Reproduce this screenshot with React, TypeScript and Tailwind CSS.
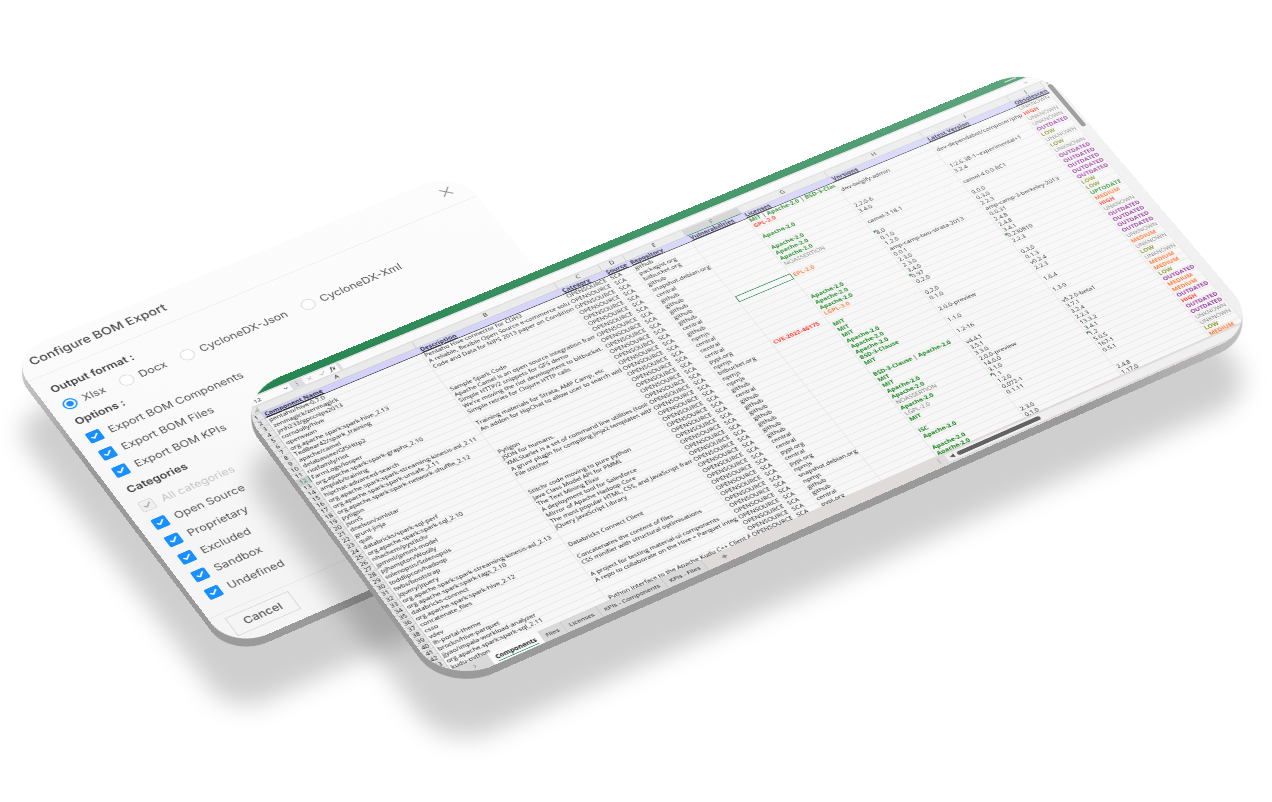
import { useState } from 'react';
import type { ReactNode } from 'react';
import { clsx } from 'clsx';
import { Check, ChevronDown, ChevronRight, Plus, X } from 'lucide-react';

type Point = [number, number];

interface Plane {
  x: number;
  y: number;
  w: number;
  h: number;
  // top left, top right, bottom right, bottom left
  corners: [Point, Point, Point, Point];
}

// Perspective matrix that carries a flat rectangle onto four corner points.
function project({ x, y, w, h, corners }: Plane) {
  const [[x0, y0], [x1, y1], [x2, y2], [x3, y3]] = corners;
  const dx1 = x1 - x2;
  const dy1 = y1 - y2;
  const dx2 = x3 - x2;
  const dy2 = y3 - y2;
  const sx = x0 - x1 + x2 - x3;
  const sy = y0 - y1 + y2 - y3;
  const det = dx1 * dy2 - dy1 * dx2;
  const g = (sx * dy2 - sy * dx2) / det;
  const k = (dx1 * sy - dy1 * sx) / det;

  const colU = [x1 - x0 + g * x1, y1 - y0 + g * y1, g].map((n) => n / w);
  const colV = [x3 - x0 + k * x3, y3 - y0 + k * y3, k].map((n) => n / h);
  const colO = [x0, y0, 1].map((n, i) => n - x * colU[i] - y * colV[i]);
  const s = colO[2];
  const [u, v, o] = [colU, colV, colO].map((col) => col.map((n) => n / s));

  return `matrix3d(${[u[0], u[1], 0, u[2], v[0], v[1], 0, v[2], 0, 0, 1, 0, o[0], o[1], 0, 1].join(',')})`;
}

const DIALOG_PLANE = project({
  x: 0,
  y: 50,
  w: 616,
  h: 438,
  corners: [[28, 382], [477, 196], [661, 423], [208, 619]],
});

const SHEET_PLANE = project({
  x: 18,
  y: 45,
  w: 1000,
  h: 420,
  corners: [[266, 416], [1016, 105], [1206, 330], [448, 663]],
});

const EDGE_LAYERS = [8, 6, 4, 2];

function Slab({
  plane,
  size,
  edge,
  label,
  children,
}: {
  plane: string;
  size: string;
  edge: string;
  label: string;
  children: ReactNode;
}) {
  return (
    <section aria-label={label}>
      <div className="pointer-events-none absolute inset-0 blur-[12px]">
        <div
          className={clsx('absolute top-0 left-0 origin-top-left bg-black/19', size)}
          style={{ transform: `translateY(66px) ${plane}` }}
        />
      </div>
      {EDGE_LAYERS.map((depth) => (
        <div
          key={depth}
          className={clsx('absolute top-0 left-0 origin-top-left', size, edge)}
          style={{ transform: `translateY(${depth}px) ${plane}` }}
        />
      ))}
      <div
        className={clsx(
          'absolute top-0 left-0 flex origin-top-left flex-col overflow-hidden [text-rendering:geometricPrecision]',
          size
        )}
        style={{ transform: plane }}
      >
        {children}
      </div>
    </section>
  );
}

/* ---------- export dialog ---------- */

const FORMATS = ['Xlsx', 'Docx', 'CycloneDX-Json', 'CycloneDX-Xml'];
const OPTIONS = ['Export BOM Components', 'Export BOM Files', 'Export BOM KPIs'];
const CATEGORIES = ['Open Source', 'Proprietary', 'Excluded', 'Sandbox', 'Undefined'];

function CheckRow({ label, disabled }: { label: string; disabled?: boolean }) {
  const [checked, setChecked] = useState(true);
  return (
    <label className={clsx('flex h-8 items-center gap-2.5', disabled ? 'text-[#c4c4c4]' : 'text-[#555555]')}>
      <span className="relative flex size-[18px]">
        <input
          type="checkbox"
          checked={checked}
          disabled={disabled}
          onChange={() => setChecked(!checked)}
          className="size-[18px] appearance-none rounded-[2px] border border-[#d4d4d4] bg-[#f0f0f0] enabled:checked:border-[#1890ff] enabled:checked:bg-[#1890ff]"
        />
        {checked && (
          <Check
            className={clsx('pointer-events-none absolute inset-[3px] size-3', disabled ? 'text-[#b0b0b0]' : 'text-white')}
            strokeWidth={4}
          />
        )}
      </span>
      {label}
    </label>
  );
}

function ExportDialog() {
  const [format, setFormat] = useState('Xlsx');
  return (
    <Slab
      plane={DIALOG_PLANE}
      size="h-[544px] w-[616px] rounded-[48px]"
      edge="bg-[linear-gradient(217deg,#fcfcfc_30%,#9a9a9a_65%)]"
      label="Configure BOM Export"
    >
      <div className="flex flex-1 flex-col bg-[linear-gradient(217deg,#fcfcfc_0%,#fbfbfb_45%,#f5f5f5_80%)] font-['Inter','Liberation_Sans',sans-serif] text-[15px] text-[#555555]">
        <header className="flex h-[50px] items-center justify-between border-b border-[#ececec] px-[17px]">
          <h2 className="text-[17px] font-medium text-[#4f4f4f]">Configure BOM Export</h2>
          <button aria-label="Close" className="text-[#8c8c8c]">
            <X className="size-6" strokeWidth={1.5} />
          </button>
        </header>
        <div className="flex-1 px-[17px] pt-[11px]">
          <h3 className="h-[30px] leading-[30px] font-semibold text-[#424242]">Output format :</h3>
          <div className="flex h-[30px] items-center gap-5">
            {FORMATS.map((name) => (
              <label key={name} className="flex items-center gap-2">
                <input
                  type="radio"
                  name="format"
                  checked={format === name}
                  onChange={() => setFormat(name)}
                  className="size-[18px] appearance-none rounded-full border border-[#cfcfcf] bg-white checked:border-2 checked:border-[#1890ff] checked:bg-[radial-gradient(circle,#1890ff_4px,#ffffff_5px)]"
                />
                {name}
              </label>
            ))}
          </div>
          <h3 className="h-[30px] leading-[30px] font-semibold text-[#424242]">Options :</h3>
          {OPTIONS.map((name) => (
            <CheckRow key={name} label={name} />
          ))}
          <h3 className="h-8 leading-8 font-semibold text-[#424242]">Categories</h3>
          <CheckRow label="All categories" disabled />
          {CATEGORIES.map((name) => (
            <CheckRow key={name} label={name} />
          ))}
        </div>
        <footer className="flex h-14 items-start border-t border-[#e6e6e6] px-[17px] pt-2">
          <button className="h-8 border border-[#d4d4d4] px-4 font-medium">Cancel</button>
        </footer>
      </div>
    </Slab>
  );
}

/* ---------- spreadsheet ---------- */

interface Row {
  name: string;
  description?: string;
  repo: string;
  license?: string;
  version?: string;
  latest?: string;
  status: string;
}

const COLUMNS = [
  { letter: 'A', title: 'Component Name', width: 'w-[198px]' },
  { letter: 'B', title: 'Description', width: 'w-[185px]' },
  { letter: 'C', title: 'Category', width: 'w-[58px]' },
  { letter: 'D', title: 'Source', width: 'w-[32px]' },
  { letter: 'E', title: 'Repository', width: 'w-[80px]' },
  { letter: 'F', title: 'Vulnerabilities', width: 'w-[74px]' },
  { letter: 'G', title: 'Licenses', width: 'w-[119px]' },
  { letter: 'H', title: 'Versions', width: 'w-[132px]' },
  { letter: 'I', title: 'Latest Version', width: 'w-[122px]' },
  { letter: 'J', title: 'Obsolescence', width: 'w-[48px]' },
];

const ROWS: Row[] = [
  { name: 'pentaho/hive-0.7.0', description: 'Pentaho Hive connector for CDH3', repo: 'github', license: 'MIT | Apache-2.0 | BSD-3-Clause', status: 'UNKNOWN' },
  { name: 'zenmagick/zenmagick', description: 'A reliable, flexible Open Source e-commerce solution', repo: 'packagist.org', license: 'GPL-2.0', version: 'dev-twigify-admin', latest: 'dev-dependabot/composer/phpunit', status: 'HIGH' },
  { name: 'jmh233/gpccnips2013', description: 'Code and Data for NIPS 2013 paper on Conditional', repo: 'bitbucket.org', status: 'UNKNOWN' },
  { name: 'corndolly/hive', repo: 'github', license: 'Apache-2.0', status: 'UNKNOWN' },
  { name: 'openswan', repo: 'snapshot.debian.org', version: '2.2.0-6', latest: '1:2.6.38-1~experimental+1', status: 'OUTDATED' },
  { name: 'org.apache.spark:spark-hive_2.13', repo: 'central', license: 'Apache-2.0', version: '3.4.0', latest: '3.2.4', status: 'LOW' },
  { name: 'TedBear42/spark_training', description: 'Sample Spark Code', repo: 'github', license: 'Apache-2.0', status: 'UNKNOWN' },
  { name: 'apache/camel', description: 'Apache Camel is an open source integration frame', repo: 'github', license: 'Apache-2.0', version: 'camel-3.18.1', latest: 'camel-4.0.0-RC1', status: 'LOW' },
  { name: 'delabassee/GfSHttp2', description: 'Simple HTTP/2 snippets for GFS demo', repo: 'github', license: 'NOASSERTION', status: 'UNKNOWN' },
  { name: 'riotfamily/riot', description: "We're moving the riot development to bitbucket. T", repo: 'github', version: '!8.0', latest: '9.0.0', status: 'OUTDATED' },
  { name: 'FarmLogs/looper', description: 'Simple retries for Clojure HTTP calls', repo: 'github', license: 'EPL-2.0', version: '0.1.0', latest: '0.3.0', status: 'OUTDATED' },
  { name: 'org.apache.spark:spark-graphx_2.10', repo: 'central', version: '1.2.0', latest: '2.2.3', status: 'OUTDATED' },
  { name: 'amplab/training', description: 'Training materials for Strata, AMP Camp, etc', repo: 'github', version: 'amp-camp-two-strata-2013', latest: 'amp-camp-3-berkeley-2013', status: 'OUTDATED' },
  { name: 'hipchat-advanced-search', description: 'An addon for HipChat to allow user to search with', repo: 'npmjs', version: '0.0.1', latest: '0.0.31', status: 'OUTDATED' },
  { name: 'org.apache.spark:spark-streaming-kinesis-asl_2.11', repo: 'central', license: 'Apache-2.0', version: '2.3.0', latest: '2.4.8', status: 'LOW' },
  { name: 'org.apache.spark:spark-unsafe_2.11', repo: 'central', license: 'Apache-2.0', version: '2.3.0', latest: '2.4.8', status: 'LOW' },
  { name: 'org.apache.spark:spark-network-shuffle_2.12', repo: 'central', license: 'Apache-2.0', version: '3.4.0', latest: '3.4.1', status: 'UPTODATE' },
  { name: 'pytigon', description: 'Pytigon', repo: 'pypi.org', license: 'LGPL-3.0', version: '!0.97', latest: '!0.230819', status: 'MEDIUM' },
  { name: 'json5', description: 'JSON for humans.', repo: 'npmjs', version: '0.2.0', latest: '2.2.3', status: 'HIGH' },
  { name: 'dnelson/xmlstar', description: 'XMLStarlet is a set of command line utilities (tools', repo: 'bitbucket.org', license: 'MIT', status: 'UNKNOWN' },
  { name: 'grunt-jinja', description: 'A grunt plugin for compiling Jinja2 templates with', repo: 'npmjs', license: 'MIT', version: '0.2.0', latest: '0.3.0', status: 'OUTDATED' },
  { name: 'quilt', description: 'File stitcher', repo: 'npmjs', license: 'MIT', version: '0.1.0', latest: '0.1.3', status: 'OUTDATED' },
  { name: 'databricks/spark-sql-perf', repo: 'github', license: 'Apache-2.0', latest: 'v0.2.4', status: 'OUTDATED' },
  { name: 'org.apache.spark:spark-sql_2.10', repo: 'central', license: 'Apache-2.0', version: '2.0.0-preview', latest: '2.2.3', status: 'OUTDATED' },
  { name: 'nhachem/pystitchr', description: 'Stitchr code moving to pure python', repo: 'github', license: 'Apache-2.0', status: 'UNKNOWN' },
  { name: 'jpmml/jpmml-model', description: 'Java Class Model API for PMML', repo: 'github', license: 'BSD-3-Clause', version: '1.1.0', latest: '1.6.4', status: 'MEDIUM' },
  { name: 'pjhampton/Woolly', description: 'The Text Mining Elixir', repo: 'github', license: 'MIT', status: 'UNKNOWN' },
  { name: 'solenopsis/Solenopsis', description: 'A deployment tool for Salesforce', repo: 'github', version: '1.2-16', latest: '1.3-9', status: 'LOW' },
  { name: 'toddlipcon/hadoop', description: 'Mirror of Apache Hadoop Core', repo: 'github', license: 'BSD-3-Clause | Apache-2.0', status: 'UNKNOWN' },
  { name: 'twbs/bootstrap', description: 'The most popular HTML, CSS, and JavaScript frame', repo: 'github', license: 'MIT', version: 'v4.4.1', latest: 'v5.2.0-beta1', status: 'MEDIUM' },
  { name: 'jquery/jquery', description: 'jQuery JavaScript Library', repo: 'github', license: 'MIT', version: '3.5.1', latest: '3.7.1', status: 'MEDIUM' },
  { name: 'org.apache.spark:spark-streaming-kinesis-asl_2.13', repo: 'central', license: 'Apache-2.0', version: '3.3.0', latest: '3.2.4', status: 'LOW' },
  { name: 'org.apache.spark:spark-tags_2.10', repo: 'central', license: 'Apache-2.0', version: '2.0.0-preview', latest: '2.2.3', status: 'OUTDATED' },
  { name: 'databricks-connect', description: 'Databricks Connect Client', repo: 'pypi.org', license: 'NOASSERTION', version: '14.0.0', latest: '13.3.2', status: 'MEDIUM' },
  { name: 'org.apache.spark:spark-hive_2.12', repo: 'central', license: 'Apache-2.0', version: '3.1.0', latest: '3.4.1', status: 'MEDIUM' },
  { name: 'concatenate_files', description: 'Concatenates the content of files', repo: 'pypi.org', license: 'LGPL-2.0', version: '!1.1', latest: '!1.2', status: 'OUTDATED' },
  { name: 'csso', description: 'CSS minifier with structural optimisations', repo: 'npmjs', license: 'MIT', version: '1.2.0', latest: '5.0.5', status: 'HIGH' },
  { name: 'vdev', repo: 'snapshot.debian.org', version: '0.072-1', latest: '167-1', status: 'OUTDATED' },
  { name: 'lh-portal-theme', description: 'A project for testing material-ui components', repo: 'npmjs', license: 'ISC', version: '0.1.11', latest: '0.5.1', status: 'OUTDATED' },
  { name: 'brockn/hive-parquet', description: 'A repo to collaborate on the Hive + Parquet integration', repo: 'github', license: 'Apache-2.0', status: 'UNKNOWN' },
  { name: 'jjyao/impala-workload-analyzer', repo: 'github', status: 'UNKNOWN' },
  { name: 'org.apache.spark:spark-sql_2.11', repo: 'central', license: 'Apache-2.0', version: '2.3.0', latest: '2.4.8', status: 'LOW' },
  { name: 'kudu-python', description: 'Python interface to the Apache Kudu C++ Client API', repo: 'pypi.org', license: 'Apache-2.0', version: '0.1.0', latest: '1.17.0', status: 'MEDIUM' },
];

const STATUS_STYLE: Record<string, string> = {
  UNKNOWN: 'text-[#6e6e6e]',
  HIGH: 'text-[#ff2a1f] font-bold',
  MEDIUM: 'text-[#ff6a1f] font-bold',
  LOW: 'text-[#828c1c] font-bold',
  OUTDATED: 'text-[#8a1f90] font-bold',
  UPTODATE: 'text-[#1f8f2b] font-bold',
};

function licenseStyle(name: string) {
  if (name === 'GPL-2.0') return 'text-[#ff2a1f] font-bold';
  if (name === 'EPL-2.0' || name === 'LGPL-3.0') return 'text-[#ff7a33] font-bold';
  if (name === 'NOASSERTION' || name === 'LGPL-2.0') return 'text-[#6e6e6e]';
  return 'text-[#0f7f16] font-bold';
}

function LicenseText({ value }: { value: string }) {
  return value.split(' | ').map((part, i) => (
    <span key={i}>
      {i > 0 && ' | '}
      <span className={licenseStyle(part)}>{part}</span>
    </span>
  ));
}

// A leading "!" flags a number stored as text, shown by a green corner mark.
function VersionText({ value }: { value?: string }) {
  if (!value) return null;
  if (!value.startsWith('!')) return value;
  return (
    <>
      <span className="absolute top-0 left-0 size-1 bg-[#1f8f3c] [clip-path:polygon(0_0,100%_0,0_100%)]" />
      {value.slice(1)}
    </>
  );
}

const CELL = 'relative overflow-hidden border-r border-b border-[#e6e6e6] py-0 pr-0 pl-0.5 whitespace-nowrap';

function Grid() {
  return (
    <table className="w-[1064px] table-fixed border-separate border-spacing-0 text-[8px] leading-[9px] text-[#0a0a0a]">
      <thead>
        <tr className="h-[11px]">
          <th className="w-4 border-r border-b border-[#c8c8c8] bg-[#e6e6e6] p-0">
            <span className="ml-auto block size-1.5 bg-[#b8b8b8] [clip-path:polygon(100%_0,100%_100%,0_100%)]" />
          </th>
          {COLUMNS.map((col) => (
            <th
              key={col.letter}
              className={clsx(
                'border-r border-b p-0 leading-[10px] font-normal',
                col.width,
                col.letter === 'F'
                  ? 'border-r-[#c8c8c8] border-b-[#1f8450] bg-[#cfcfcf] text-[#1f8450]'
                  : 'border-[#c8c8c8] bg-[#e9e9e9]'
              )}
            >
              {col.letter}
            </th>
          ))}
        </tr>
      </thead>
      <tbody>
        <tr className="h-2.5">
          <th className="border-r border-b border-[#c8c8c8] bg-[#e6e6e6] p-0 text-center font-normal">1</th>
          {COLUMNS.map((col) => (
            <th
              key={col.letter}
              className="border-b border-[#3d3d3d] bg-[#d2d0fa] p-0 pl-0.5 text-left font-bold whitespace-nowrap text-[#20202e] underline"
            >
              {col.title}
            </th>
          ))}
        </tr>
        {ROWS.map((row, i) => (
          <tr key={i} className="h-2.5">
            <th
              className={clsx(
                'border-r border-b p-0 text-center font-normal',
                i === 10
                  ? 'border-r-[#1f8450] border-b-[#c8c8c8] bg-[#cfcfcf] text-[#1f8450]'
                  : 'border-[#c8c8c8] bg-[#e6e6e6]'
              )}
            >
              {i + 2}
            </th>
            <td className={CELL}>{row.name}</td>
            <td className={CELL}>{row.description}</td>
            <td className={CELL}>OPENSOURCE</td>
            <td className={CELL}>SCA</td>
            <td className={CELL}>{row.repo}</td>
            <td className={clsx(CELL, i === 10 && 'outline -outline-offset-1 outline-[#1f8450]')}>
              {i === 18 && <span className="font-bold text-[#ff2a1f]">CVE-2022-46175</span>}
            </td>
            <td className={CELL}>{row.license && <LicenseText value={row.license} />}</td>
            <td className={CELL}>
              <VersionText value={row.version} />
            </td>
            <td className={CELL}>
              <VersionText value={row.latest} />
            </td>
            <td className={clsx(CELL, STATUS_STYLE[row.status])}>{row.status}</td>
          </tr>
        ))}
      </tbody>
    </table>
  );
}

const TABS = ['Components', 'Files', 'Licenses', 'KPIs - Components', 'KPIs - Files'];

function Spreadsheet() {
  const [tab, setTab] = useState('Components');
  const [cell, setCell] = useState('F12');
  const [formula, setFormula] = useState('');
  return (
    <Slab
      plane={SHEET_PLANE}
      size="h-[493px] w-[1078px] rounded-[60px]"
      edge="bg-[linear-gradient(209deg,#ffffff_25%,#9a9a9a_58%)]"
      label="BOM workbook"
    >
      <div className="flex flex-1 flex-col bg-[#f7f7f7] font-['Open_Sans','Noto_Sans',sans-serif] text-[8px] text-[#1c1c1c]">
        <div className="flex h-[11px] items-center justify-end bg-[#1d8149] pr-9">
          <span className="h-0.5 w-4 bg-white/60" />
        </div>
        <div className="flex h-4 items-stretch bg-[#dcdde0] py-0.5">
          <div className="flex w-[63px] items-center bg-[#fafafa] pr-0.5 pl-3">
            <input
              aria-label="Name box"
              value={cell}
              onChange={(e) => setCell(e.target.value)}
              className="w-full min-w-0 bg-transparent"
            />
            <ChevronDown className="size-2 shrink-0 text-[#555]" />
          </div>
          <span className="w-4 text-center leading-3">⋮</span>
          <div className="flex w-11 items-center justify-around bg-[#fafafa]">
            <X className="size-2.5 text-[#b4b4b4]" />
            <Check className="size-2.5 text-[#b4b4b4]" />
            <span className="font-semibold italic">fx</span>
          </div>
          <input
            aria-label="Formula"
            value={formula}
            onChange={(e) => setFormula(e.target.value)}
            className="ml-1 min-w-0 flex-1 bg-[#fafafa]"
          />
          <ChevronDown className="h-full w-9 bg-[#fafafa] py-0.5 pr-6 text-[#555]" />
        </div>
        <div className="flex min-h-0 flex-1 basis-0 overflow-hidden">
          <Grid />
          <div className="flex flex-1 flex-col items-center bg-[#efefef] pt-0.5">
            <span className="size-1 bg-[#777] [clip-path:polygon(50%_0,100%_100%,0_100%)]" />
            <span className="mt-0.5 h-20 w-1.5 rounded-full bg-[#7e7e7e]" />
          </div>
        </div>
        <div className="relative flex h-[18px] items-stretch bg-[#dfdbda]">
          <div className="flex w-[61px] items-center justify-end bg-[#d9d9d9] pr-4">
            <ChevronRight className="size-2 text-[#777]" />
          </div>
          {TABS.map((name) => (
            <button
              key={name}
              onClick={() => setTab(name)}
              className={clsx(
                'h-[18px] px-1.5 whitespace-nowrap',
                tab === name ? 'bg-[#fafafa] font-bold' : 'border-r border-[#c8c8c8] bg-[#d9d9d9]'
              )}
            >
              <span className={clsx('block leading-3', tab === name && 'border-b border-[#2d9b63]')}>{name}</span>
            </button>
          ))}
          <button aria-label="New sheet" className="px-5">
            <Plus className="size-2.5 text-[#555]" />
          </button>
          <div className="absolute inset-y-0 right-0 flex w-[441px] items-center">
            <span className="mr-1.5 text-[#555]">⋮</span>
            <div className="flex h-3 flex-1 items-center bg-[#efefef] pl-1">
              <span className="size-1.5 bg-[#555] [clip-path:polygon(100%_0,100%_100%,0_50%)]" />
              <span className="ml-1 h-1.5 w-28 rounded-full bg-[#636363]" />
            </div>
          </div>
        </div>
      </div>
      <div className="pointer-events-none absolute inset-0 bg-[linear-gradient(209deg,rgba(255,255,255,0.3),rgba(255,255,255,0)_60%)]" />
    </Slab>
  );
}

export default function App() {
  return (
    <main className="relative min-h-screen overflow-hidden bg-white">
      <ExportDialog />
      <Spreadsheet />
    </main>
  );
}
